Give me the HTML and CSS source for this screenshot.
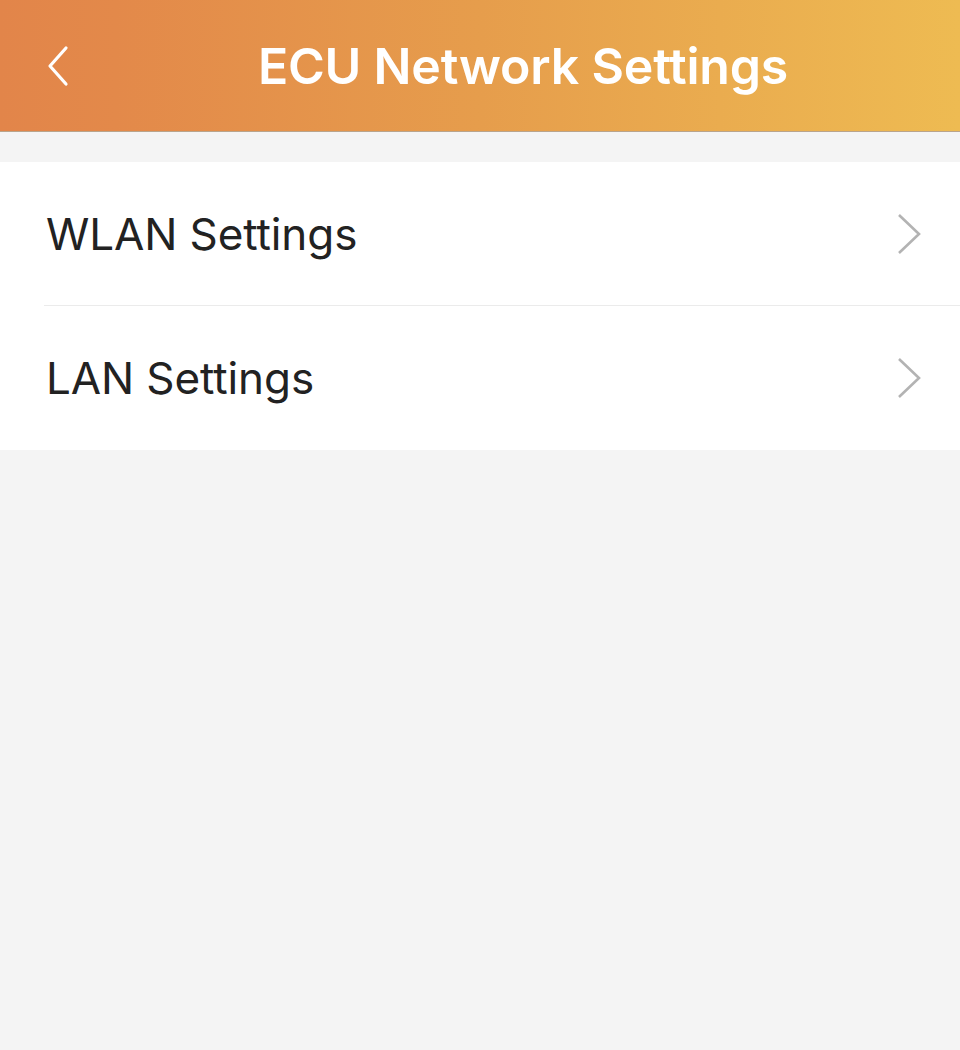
FILE: index.html
```html
<!DOCTYPE html>
<html lang="en">
<head>
    <meta charset="UTF-8">
    <meta name="viewport" content="width=device-width, initial-scale=1.0">
    <title>ECU Network Settings</title>
    <link rel="stylesheet" href="styles.css">
</head>
<body>
    <div class="header">
        <a class="back" href="#">
            <svg width="24" height="44" viewBox="0 0 24 44">
                <path d="M20 4 L4 22 L20 40" fill="none" stroke="#fff" stroke-width="3.2" stroke-linecap="round" stroke-linejoin="round"/>
            </svg>
        </a>
        <h1 class="title">ECU Network Settings</h1>
    </div>

    <div class="list">
        <a class="row" href="#">
            <span class="label">WLAN Settings</span>
            <svg class="arrow" width="26" height="44" viewBox="0 0 26 44">
                <path d="M3 3 L23 22 L3 41" fill="none" stroke="#b3b3b3" stroke-width="2.6"/>
            </svg>
        </a>
        <a class="row" href="#">
            <span class="label">LAN Settings</span>
            <svg class="arrow" width="26" height="44" viewBox="0 0 26 44">
                <path d="M3 3 L23 22 L3 41" fill="none" stroke="#b3b3b3" stroke-width="2.6"/>
            </svg>
        </a>
    </div>
</body>
</html>
```

FILE: styles.css
```css
body {
    margin: 0;
    background-color: #f4f4f4;
    font-family: Inter, "Noto Sans", sans-serif;
}
.header {
    height: 131px;
    display: flex;
    align-items: center;
    background: linear-gradient(to right, #e2854a, #e3894a 12%, #e69d4c 50%, #eebb52);
    border-bottom: 1px solid #b9a48c;
}
.back {
    display: flex;
    margin-left: 46px;
}
.title {
    flex: 1;
    margin: 0;
    padding-left: 16px;
    text-align: center;
    color: #fff;
    font-size: 50px;
    font-weight: 600;
    letter-spacing: -0.2px;
}
.list {
    margin-top: 30px;
    background-color: #fff;
}
.row {
    display: flex;
    align-items: center;
    justify-content: space-between;
    height: 143px;
    margin-left: 44px;
    padding-right: 38px;
    text-decoration: none;
    border-bottom: 1px solid #ebebeb;
}
.row:last-child {
    border-bottom: none;
    height: 144px;
}
.label {
    color: #222;
    font-size: 44px;
    letter-spacing: -0.1px;
    margin-left: 2px;
}
.arrow {
    display: block;
}
```
